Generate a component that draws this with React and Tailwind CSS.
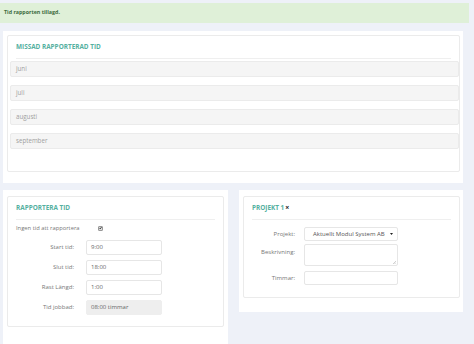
const months = ["juni", "juli", "augusti", "september"];

function Heading({ children }) {
  return (
    <div className="mx-[8px] h-[23px] flex items-center border-b border-[#efefef] text-[6.4px] font-bold text-[#55b09f] uppercase">
      {children}
    </div>
  );
}

function FieldRow({ label, value, disabled = false }) {
  return (
    <div className="flex items-center h-[15px]">
      <div className="w-[58px] text-right text-[6px] text-[#777]">{label}</div>
      <div
        className={`ml-[12px] w-[76px] h-[15px] flex items-center pl-[4px] rounded-[2px] text-[6px] text-[#666] ${
          disabled ? "bg-[#eeeeee] border border-[#eeeeee]" : "bg-white border border-[#e6e6e6]"
        }`}
      >
        {value}
      </div>
    </div>
  );
}

export default function App() {
  return (
    <div className="w-[474px] h-[344px] overflow-hidden bg-[#eef1f8] pt-[3px] font-['Open_Sans',sans-serif]">
      <div className="w-[469px] h-[20px] bg-[#dff0d8] flex items-center pl-[4px] text-[5.3px] font-bold text-[#3c6b3d]">
        Tid rapporten tillagd.
      </div>

      <div className="mt-[8px] ml-[3px] w-[460px] h-[152px] bg-white pt-[4px] pl-[4px]">
        <div className="w-[453px] h-[137px] border border-[#ebebeb] rounded-[2px]">
          <Heading>Missad rapporterad tid</Heading>
          <div className="mt-[2px] ml-[2px] flex flex-col gap-[8px]">
            {months.map((m) => (
              <div
                key={m}
                className="h-[16px] flex items-center pl-[5px] bg-[#f5f5f5] border border-[#ebebeb] rounded-[2px] text-[6.2px] text-[#a0a0a0]"
              >
                {m}
              </div>
            ))}
          </div>
        </div>
      </div>

      <div className="mt-[7px] ml-[3px] flex gap-[11px] items-start">
        <div className="w-[225px] h-[160px] bg-white pt-[6px] pl-[4px]">
          <div className="w-[217px] h-[131px] border border-[#ebebeb] rounded-[2px]">
            <Heading>Rapportera tid</Heading>
            <div className="ml-[8px] h-[16px] flex items-center">
              <div className="w-[82px] text-[5.8px] text-[#777]">Ingen tid att rapportera</div>
              <div className="w-[5px] h-[5px] bg-[#dcdcdc] border border-[#999] rounded-[1px] flex items-center justify-center">
                <svg viewBox="0 0 10 10" className="w-[4px] h-[4px]">
                  <path d="M1.5 5.5 L4 8 L8.5 2" fill="none" stroke="#111" strokeWidth="2.4" />
                </svg>
              </div>
            </div>
            <div className="mt-[4px] ml-[8px] flex flex-col gap-[5px]">
              <FieldRow label="Start tid:" value="9:00" />
              <FieldRow label="Slut tid:" value="18:00" />
              <FieldRow label="Rast Längd:" value="1:00" />
              <FieldRow label="Tid jobbad:" value="08:00 timmar" disabled />
            </div>
          </div>
        </div>

        <div className="w-[224px] h-[122px] bg-white pt-[6px] pl-[4px]">
          <div className="w-[217px] h-[102px] border border-[#ebebeb] rounded-[2px]">
            <Heading>
              Projekt 1<span className="ml-[1px] text-[#222] text-[7px] font-bold">×</span>
            </Heading>
            <div className="mt-[7px] ml-[8px] flex items-center h-[14px]">
              <div className="w-[43px] text-right text-[6px] text-[#777]">Projekt:</div>
              <div className="ml-[9px] w-[94px] h-[14px] flex items-center justify-between pl-[8px] pr-[4px] bg-white border border-[#e6e6e6] rounded-[2px] text-[6px] text-[#555]">
                <span>Aktuellt Modul System AB</span>
                <svg viewBox="0 0 6 4" className="w-[3px] h-[2px]">
                  <path d="M0 0 H6 L3 4 Z" fill="#222" />
                </svg>
              </div>
            </div>
            <div className="mt-[3px] ml-[8px] flex items-start">
              <div className="w-[43px] pt-[4px] text-right text-[6px] text-[#777]">Beskrivning:</div>
              <div className="relative ml-[9px] w-[94px] h-[22px] bg-white border border-[#e6e6e6] rounded-[2px]">
                <svg viewBox="0 0 4 4" className="absolute right-[1px] bottom-[1px] w-[3px] h-[3px]">
                  <path d="M4 0 L0 4 M4 2 L2 4" stroke="#999" strokeWidth="0.6" />
                </svg>
              </div>
            </div>
            <div className="mt-[5px] ml-[8px] flex items-center h-[14px]">
              <div className="w-[43px] text-right text-[6px] text-[#777]">Timmar:</div>
              <div className="ml-[9px] w-[94px] h-[14px] bg-white border border-[#e6e6e6] rounded-[2px]" />
            </div>
          </div>
        </div>
      </div>
    </div>
  );
}
